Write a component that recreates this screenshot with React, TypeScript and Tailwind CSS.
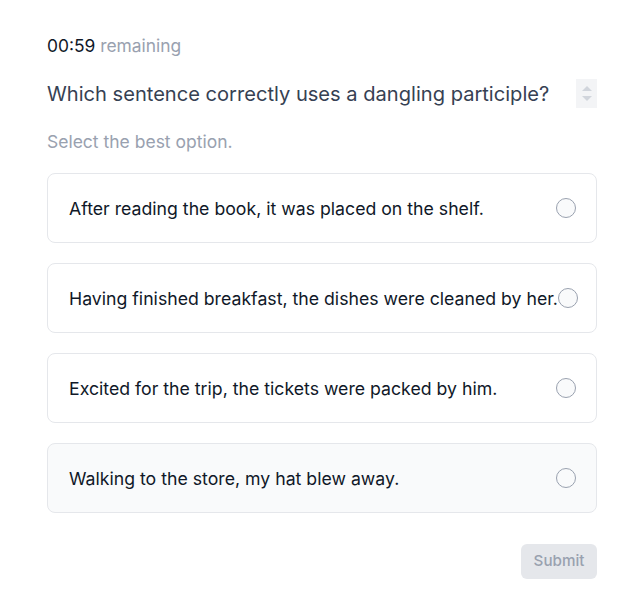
import { useState } from 'react';

const options = [
  'After reading the book, it was placed on the shelf.',
  'Having finished breakfast, the dishes were cleaned by her.',
  'Excited for the trip, the tickets were packed by him.',
  'Walking to the store, my hat blew away.',
];

const App = () => {
  const [selected, setSelected] = useState<number | null>(null);

  return (
    <div className="min-h-screen bg-white font-['Inter',sans-serif]">
      <div className="w-[550px] ml-[47px] pt-[34px]">
        <p className="text-[17.4px] leading-6 text-gray-900">
          00:59 <span className="text-gray-400">remaining</span>
        </p>

        <div className="mt-[21px] flex items-center justify-between">
          <h2 className="text-[20.1px] leading-7 text-gray-700">
            Which sentence correctly uses a dangling participle?
          </h2>
          {/* little scroll spinner */}
          <div className="w-[21px] h-[29px] bg-gray-100 flex flex-col items-center justify-center gap-[5px]">
            <div className="w-0 h-0 border-l-[5px] border-r-[5px] border-b-[5px] border-l-transparent border-r-transparent border-b-gray-300" />
            <div className="w-0 h-0 border-l-[5px] border-r-[5px] border-t-[5px] border-l-transparent border-r-transparent border-t-gray-300" />
          </div>
        </div>

        <p className="mt-[22px] text-[17.5px] leading-6 text-gray-400">Select the best option.</p>

        <div className="mt-[19px] flex flex-col gap-5">
          {options.map((option, index) => (
            <button
              key={index}
              type="button"
              onClick={() => setSelected(index)}
              className={`w-full text-left border border-gray-200 rounded-lg pl-[21px] pr-5 pt-[23px] pb-[21px] flex items-center justify-between ${
                index === 3 ? 'bg-gray-50' : 'bg-white'
              }`}
            >
              <span className="whitespace-nowrap text-[17.7px] leading-6 text-gray-900">{option}</span>
              <span
                className={`w-5 h-5 shrink-0 -mt-0.5 rounded-full border ${
                  selected === index ? 'border-blue-600 border-[6px]' : 'border-gray-400 bg-gray-50'
                }`}
              />
            </button>
          ))}
        </div>

        <div className="mt-[31px] flex justify-end">
          <button
            type="button"
            disabled={selected === null}
            className="w-[76px] h-[35px] rounded-md bg-gray-200 text-[15.2px] font-medium text-gray-400"
          >
            Submit
          </button>
        </div>
      </div>
    </div>
  );
};

export default App;
